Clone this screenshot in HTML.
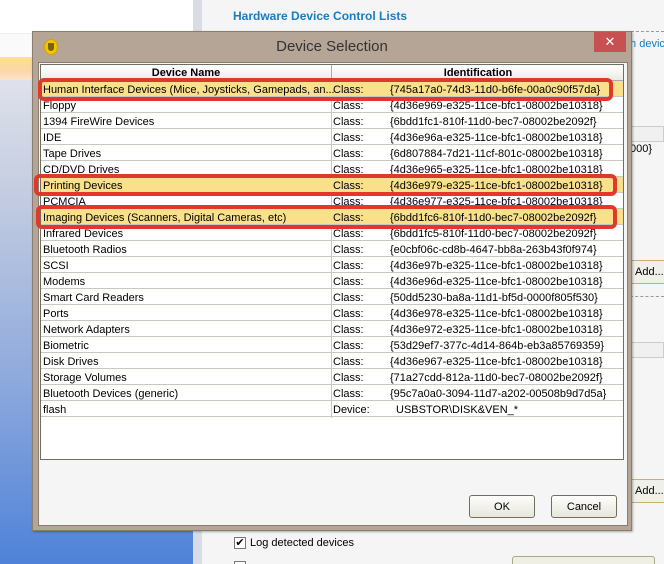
<!DOCTYPE html>
<html><head><meta charset="utf-8"><style>
*{margin:0;padding:0;box-sizing:border-box}
html,body{width:664px;height:564px;overflow:hidden}
body{position:relative;font-family:"Liberation Sans",sans-serif;background:#f5f5f5}
.abs{position:absolute;white-space:nowrap}
.row{position:absolute;left:0;width:582px;height:16px;border-bottom:1px solid #c8c8c0;font-size:11px;line-height:16px;white-space:nowrap}
.row span{position:absolute;top:1px}
.c1{left:2px}.c2{left:292px}.c3{left:349px}
.hl{background:#fbe08c}
.red{position:absolute;border:4px solid #e0392b;border-radius:6px}
.btn{position:absolute;border:1px solid #6f6f60;border-radius:3px;background:linear-gradient(#fdfdfb,#e8e6dc);font-size:11px;text-align:center;line-height:22px}
</style></head><body>
<div class="abs" style="left:0;top:0;width:193px;height:564px;background:linear-gradient(#dfe1ea 80px,#c2cbe0 200px,#8ea9dc 380px,#4f82d8 564px)"></div>
<div class="abs" style="left:0;top:0;width:193px;height:33px;background:#fff"></div>
<div class="abs" style="left:0;top:33px;width:193px;height:24px;background:#fafafa;border-top:1px solid #eee"></div>
<div class="abs" style="left:0;top:57px;width:193px;height:23px;background:linear-gradient(#fde08a,#fcd6a8 60%,#fbe4c8)"></div>
<div class="abs" style="left:193px;top:0;width:9px;height:564px;background:#d9dbe6"></div>
<div class="abs" style="left:233px;top:9px;font-size:12px;font-weight:bold;color:#1a7cc1">Hardware Device Control Lists</div>
<div class="abs" style="left:230px;top:31px;width:434px;border-top:1px dashed #999"></div>
<div class="abs" style="left:627px;top:38px;font-size:11px;color:#1a7cc1">th devic</div>
<div class="abs" style="left:630px;top:126px;width:34px;height:16px;background:#f0f0f0;border:1px solid #ccc"></div>
<div class="abs" style="left:630px;top:143px;font-size:11px">000}</div>
<div class="abs" style="left:630px;top:260px;width:40px;height:24px;border:1px solid #c8b070;background:#f0f0ea;font-size:11px;line-height:22px;padding-left:4px">Add...</div>
<div class="abs" style="left:630px;top:296px;width:34px;border-top:1px dashed #999"></div>
<div class="abs" style="left:630px;top:342px;width:34px;height:16px;background:#f0f0f0;border:1px solid #ccc"></div>
<div class="abs" style="left:630px;top:479px;width:40px;height:24px;border:1px solid #c8b070;background:#f0f0ea;font-size:11px;line-height:22px;padding-left:4px">Add...</div>
<div class="abs" style="left:234px;top:537px;width:12px;height:12px;border:1px solid #777;background:#fff;font-size:11px;line-height:10px;text-align:center">✔</div>
<div class="abs" style="left:250px;top:537px;font-size:11px">Log detected devices</div>
<div class="abs" style="left:234px;top:561px;width:12px;height:12px;border:1px solid #777;background:#fff"></div>
<div class="abs" style="left:512px;top:556px;width:143px;height:20px;border:1px solid #a8a88a;border-radius:3px;background:#f0efe4"></div>
<div class="abs" style="left:32px;top:31px;width:600px;height:500px;background:#b5a596;border:1px solid #8a7d70;box-shadow:1px 1px 2px rgba(0,0,0,.3)"></div>
<div class="abs" style="left:0;top:38px;width:664px;text-align:center;font-size:15px;color:#333">Device Selection</div>
<div class="abs" style="left:44px;top:39px;width:14px;height:16px;border-radius:50%;background:#f4c400;border:1px solid #d9a000"><div style="position:absolute;left:3px;top:3px;width:6px;height:8px;background:#7a6400;border-radius:0 0 3px 3px"></div></div>
<div class="abs" style="left:594px;top:32px;width:32px;height:20px;background:#c75050;color:#fff;font-size:13px;text-align:center;line-height:20px">✕</div>
<div class="abs" style="left:38px;top:62px;width:590px;height:464px;background:#f5f5f5;border:1px solid #8a7d70"></div>
<div class="abs" style="left:40px;top:64px;width:584px;height:396px;background:#fff;border:1px solid #6e6e62">
 <div style="position:absolute;left:0;top:0;width:582px;height:16px;background:linear-gradient(#fff,#ecebe4);border-bottom:1px solid #aaa;font-size:11px;font-weight:bold;line-height:17px;overflow:hidden">
  <span style="position:absolute;left:0;width:291px;text-align:center;border-right:1px solid #aaa;height:16px">Device Name</span>
  <span style="position:absolute;left:292px;width:290px;text-align:center">Identification</span>
 </div>
 <div class="abs" style="left:290px;top:16px;width:1px;height:337px;background:#c8c8c0"></div>
 <div class="row hl" style="top:16px"><span class="c1">Human Interface Devices (Mice, Joysticks, Gamepads, an...</span><span class="c2">Class:</span><span class="c3">{745a17a0-74d3-11d0-b6fe-00a0c90f57da}</span></div>
 <div class="row" style="top:32px"><span class="c1">Floppy</span><span class="c2">Class:</span><span class="c3">{4d36e969-e325-11ce-bfc1-08002be10318}</span></div>
 <div class="row" style="top:48px"><span class="c1">1394 FireWire Devices</span><span class="c2">Class:</span><span class="c3">{6bdd1fc1-810f-11d0-bec7-08002be2092f}</span></div>
 <div class="row" style="top:64px"><span class="c1">IDE</span><span class="c2">Class:</span><span class="c3">{4d36e96a-e325-11ce-bfc1-08002be10318}</span></div>
 <div class="row" style="top:80px"><span class="c1">Tape Drives</span><span class="c2">Class:</span><span class="c3">{6d807884-7d21-11cf-801c-08002be10318}</span></div>
 <div class="row" style="top:96px"><span class="c1">CD/DVD Drives</span><span class="c2">Class:</span><span class="c3">{4d36e965-e325-11ce-bfc1-08002be10318}</span></div>
 <div class="row hl" style="top:112px"><span class="c1">Printing Devices</span><span class="c2">Class:</span><span class="c3">{4d36e979-e325-11ce-bfc1-08002be10318}</span></div>
 <div class="row" style="top:128px"><span class="c1">PCMCIA</span><span class="c2">Class:</span><span class="c3">{4d36e977-e325-11ce-bfc1-08002be10318}</span></div>
 <div class="row hl" style="top:144px"><span class="c1">Imaging Devices (Scanners, Digital Cameras, etc)</span><span class="c2">Class:</span><span class="c3">{6bdd1fc6-810f-11d0-bec7-08002be2092f}</span></div>
 <div class="row" style="top:160px"><span class="c1">Infrared Devices</span><span class="c2">Class:</span><span class="c3">{6bdd1fc5-810f-11d0-bec7-08002be2092f}</span></div>
 <div class="row" style="top:176px"><span class="c1">Bluetooth Radios</span><span class="c2">Class:</span><span class="c3">{e0cbf06c-cd8b-4647-bb8a-263b43f0f974}</span></div>
 <div class="row" style="top:192px"><span class="c1">SCSI</span><span class="c2">Class:</span><span class="c3">{4d36e97b-e325-11ce-bfc1-08002be10318}</span></div>
 <div class="row" style="top:208px"><span class="c1">Modems</span><span class="c2">Class:</span><span class="c3">{4d36e96d-e325-11ce-bfc1-08002be10318}</span></div>
 <div class="row" style="top:224px"><span class="c1">Smart Card Readers</span><span class="c2">Class:</span><span class="c3">{50dd5230-ba8a-11d1-bf5d-0000f805f530}</span></div>
 <div class="row" style="top:240px"><span class="c1">Ports</span><span class="c2">Class:</span><span class="c3">{4d36e978-e325-11ce-bfc1-08002be10318}</span></div>
 <div class="row" style="top:256px"><span class="c1">Network Adapters</span><span class="c2">Class:</span><span class="c3">{4d36e972-e325-11ce-bfc1-08002be10318}</span></div>
 <div class="row" style="top:272px"><span class="c1">Biometric</span><span class="c2">Class:</span><span class="c3">{53d29ef7-377c-4d14-864b-eb3a85769359}</span></div>
 <div class="row" style="top:288px"><span class="c1">Disk Drives</span><span class="c2">Class:</span><span class="c3">{4d36e967-e325-11ce-bfc1-08002be10318}</span></div>
 <div class="row" style="top:304px"><span class="c1">Storage Volumes</span><span class="c2">Class:</span><span class="c3">{71a27cdd-812a-11d0-bec7-08002be2092f}</span></div>
 <div class="row" style="top:320px"><span class="c1">Bluetooth Devices (generic)</span><span class="c2">Class:</span><span class="c3">{95c7a0a0-3094-11d7-a202-00508b9d7d5a}</span></div>
 <div class="row" style="top:336px"><span class="c1">flash</span><span class="c2">Device:</span><span class="c3" style="left:355px">USBSTOR\DISK&amp;VEN_*</span></div>
</div>
<div class="red" style="left:38px;top:78px;width:575px;height:23px"></div>
<div class="red" style="left:34px;top:174px;width:583px;height:22px"></div>
<div class="red" style="left:36px;top:205px;width:581px;height:24px"></div>
<div class="btn" style="left:469px;top:495px;width:66px;height:23px">OK</div>
<div class="btn" style="left:551px;top:495px;width:66px;height:23px">Cancel</div>
</body></html>
